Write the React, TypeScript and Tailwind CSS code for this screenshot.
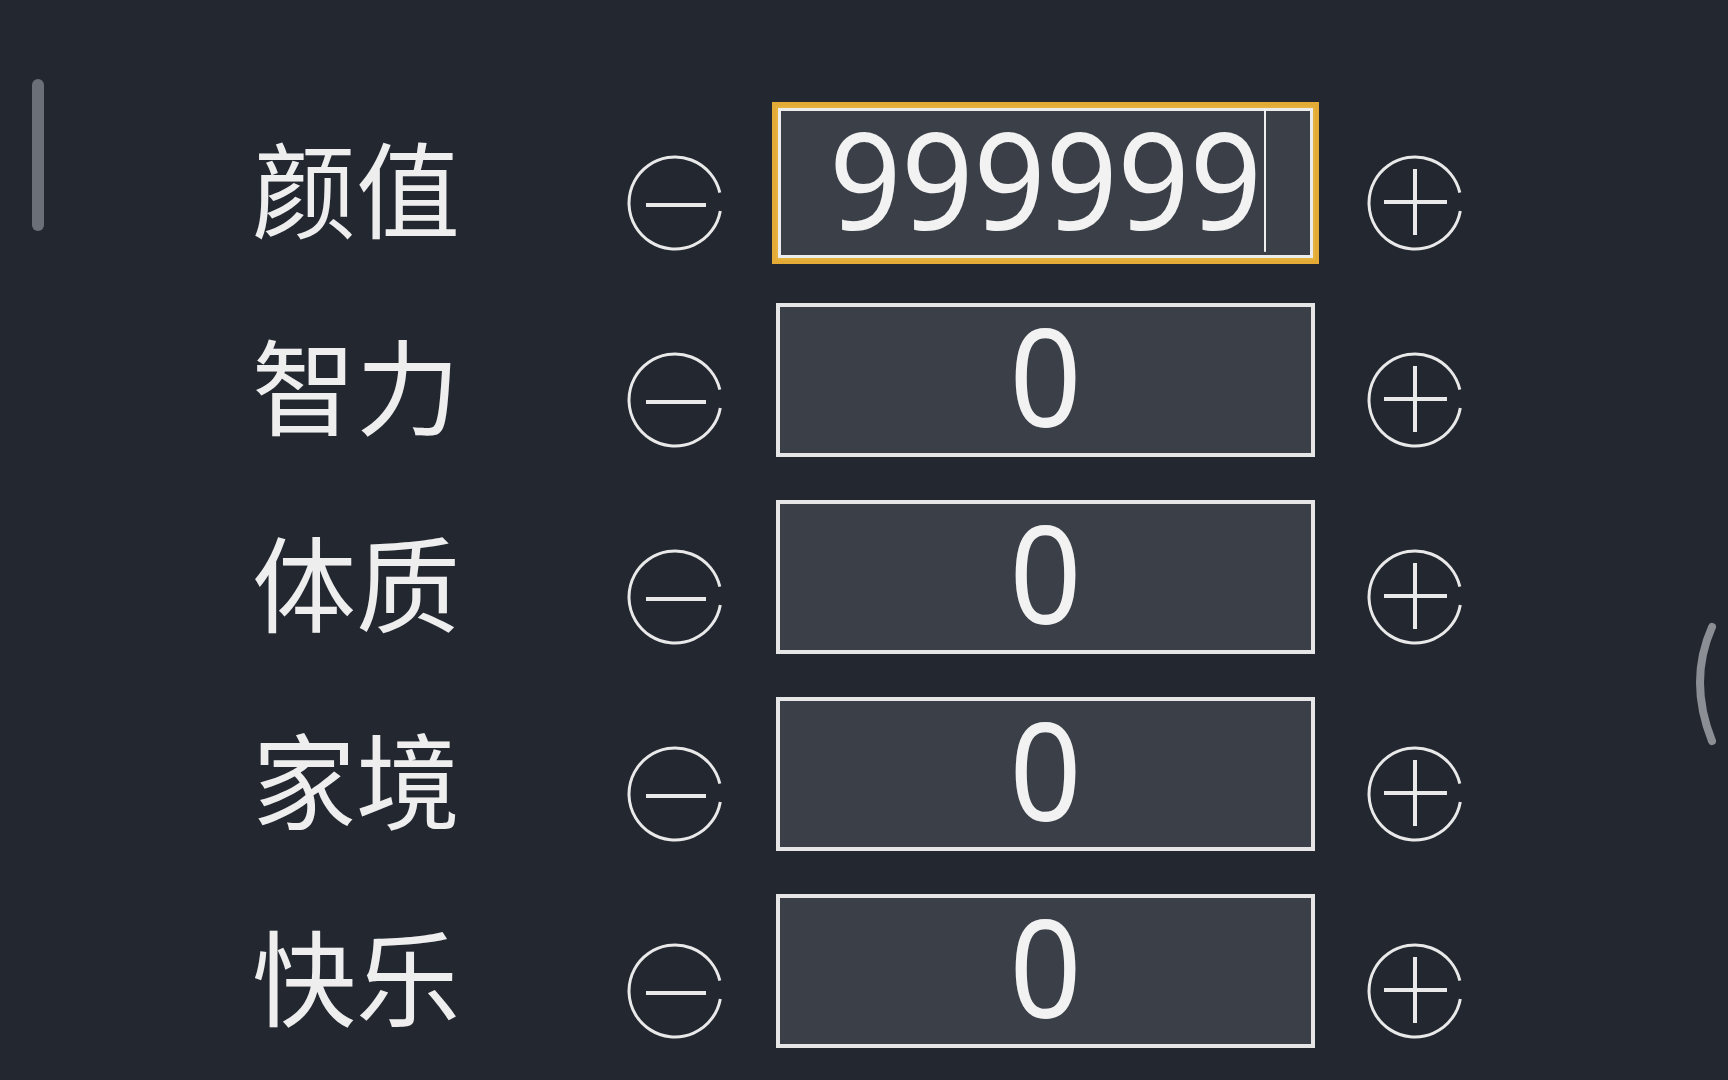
import React from 'react';

const stats = [
  { name: '颜值', value: '999999', focused: true },
  { name: '智力', value: '0', focused: false },
  { name: '体质', value: '0', focused: false },
  { name: '家境', value: '0', focused: false },
  { name: '快乐', value: '0', focused: false },
];

// circle with a small gap on the right, like the original glyph
const Ring = () => (
  <path
    d="M 93.30 55.99 A 46 46 0 1 1 92.82 37.65"
    fill="none"
    stroke="#e9e9e9"
    strokeWidth="3"
  />
);

const MinusIcon = () => (
  <svg width="96" height="96" viewBox="0 0 96 96" className="shrink-0">
    <Ring />
    <line x1="19" y1="50" x2="79" y2="50" stroke="#e9e9e9" strokeWidth="4" />
  </svg>
);

const PlusIcon = () => (
  <svg width="96" height="96" viewBox="0 0 96 96" className="shrink-0">
    <Ring />
    <line x1="17" y1="47" x2="80" y2="47" stroke="#e9e9e9" strokeWidth="4" />
    <line x1="48" y1="14" x2="48" y2="80" stroke="#e9e9e9" strokeWidth="4" />
  </svg>
);

const App = () => {
  return (
    <div className="relative w-full h-[1080px] overflow-hidden bg-[#232730]">
      {/* scrollbar thumb */}
      <div className="absolute left-[32px] top-[79px] w-[12px] h-[152px] rounded-full bg-[#6b6f77]" />

      {/* edge swipe indicator */}
      <svg className="absolute left-[1686px] top-[619px]" width="32" height="130" viewBox="0 0 32 130">
        <path d="M 26 8 Q 2 62 26 122" fill="none" stroke="#8b8e94" strokeWidth="8" strokeLinecap="round" />
      </svg>

      <div className="flex flex-col gap-[43px] pt-[106px] pl-[252px]">
        {stats.map((stat, index) => (
          <div key={index} className="flex items-center h-[154px]">
            <div
              className="w-[208px] text-[104px] font-normal leading-none text-[#eeeeee] mt-[6px]"
              style={{ fontFamily: '"Noto Sans CJK SC", "Noto Sans", sans-serif' }}
            >
              {stat.name}
            </div>
            <div className="ml-[167px] mt-[40px]">
              <MinusIcon />
            </div>
            <div
              className={
                stat.focused
                  ? 'ml-[53px] w-[539px] h-[154px] border-[2px] border-[#e6b23e] outline-[4px] outline-solid outline-[#e3ab35] shadow-[inset_0_0_0_3px_#ececec] bg-[#3a3f48] flex items-center justify-center'
                  : 'ml-[53px] w-[539px] h-[154px] border-[4px] border-[#e6e6e6] bg-[#3a3f48] flex items-center justify-center'
              }
            >
              <span
                className="relative text-[126px] leading-none text-[#f2f2f2] -mt-[10px] scale-y-[1.07]"
                style={{ fontFamily: '"Noto Sans", "Open Sans", sans-serif' }}
              >
                {stat.value}
                {stat.focused && (
                  <span className="absolute -right-[4px] top-[-2px] w-[2px] h-[134px] bg-[#f0f0f0]" />
                )}
              </span>
            </div>
            <div className="ml-[52px] mt-[40px]">
              <PlusIcon />
            </div>
          </div>
        ))}
      </div>
    </div>
  );
};

export default App;
